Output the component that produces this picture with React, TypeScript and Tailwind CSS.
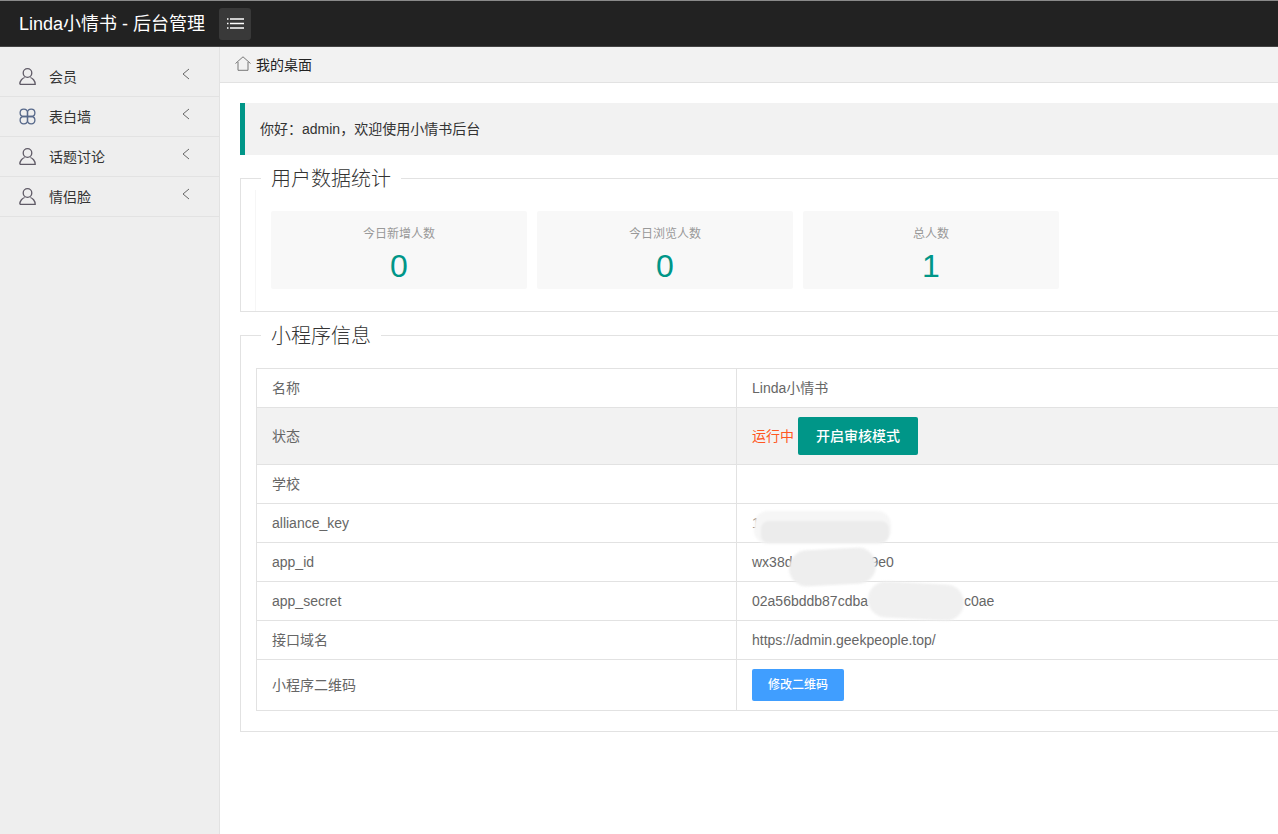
const font = "[font-family:'Liberation_Sans','Noto_Sans_CJK_SC',sans-serif]";

function UserIcon() {
  return (
    <svg width="18" height="17" viewBox="0 0 18 17" fill="none" stroke="#5f5a66" strokeWidth="1.3">
      <circle cx="8.500" cy="5" r="4.300" />
      <path d="M.8 16.300h15.400c0-3.700-2.800-6.200-4.800-6.800M.8 16.300c0-3.700 2.800-6.200 4.800-6.800" />
    </svg>
  );
}

function CloverIcon() {
  return (
    <svg width="18" height="18" viewBox="0 0 18 18" fill="none" stroke="#56688a" strokeWidth="1.3">
      <path d="M8.500 8.500H4.500a3.700 3.700 0 1 1 4-4z" />
      <path d="M8.500 8.500h4a3.700 3.700 0 1 0-4-4z" />
      <path d="M8.500 8.500H4.500a3.700 3.700 0 1 0 4 4z" />
      <path d="M8.500 8.500h4a3.700 3.700 0 1 1-4 4z" />
    </svg>
  );
}

function Chevron() {
  return (
    <svg width="8" height="12" viewBox="0 0 8 12" fill="none" stroke="#666" strokeWidth="1">
      <path d="M7 1L1 6l6 5" />
    </svg>
  );
}

function SideItem({ label, icon }: { label: string; icon: React.ReactNode }) {
  return (
    <div className="flex h-10 items-center border-b border-[#e2e2e2] pl-[19px] pr-[29px] text-sm text-[#333]">
      <span className="flex w-[30px] shrink-0">{icon}</span>
      <span className="flex-1 pt-[1px]">{label}</span>
      <span className="-mt-[5px] flex">
        <Chevron />
      </span>
    </div>
  );
}

function StatCard({ label, value }: { label: string; value: string }) {
  return (
    <div className="flex h-[78px] w-[256px] flex-col items-center rounded-[2px] bg-[#f8f8f8] pt-[15px]">
      <p className="text-xs leading-[17px] text-[#999]">{label}</p>
      <p className="mt-[4px] text-[32px] leading-[38px] text-[#009688]">{value}</p>
    </div>
  );
}

function Row({
  label,
  children,
  className = "",
}: {
  label: string;
  children?: React.ReactNode;
  className?: string;
}) {
  return (
    <tr className={className}>
      <td className="border border-[#e2e2e2] px-[15px] py-0 text-sm text-[#666]">{label}</td>
      <td className="relative border border-[#e2e2e2] px-[15px] py-0 text-sm text-[#666]">{children}</td>
    </tr>
  );
}

function Legend({ title }: { title: string }) {
  return (
    <legend className="ml-[5px] px-[10px] text-xl leading-[24px] font-light text-[#333]">
      <span className="block translate-y-px">{title}</span>
    </legend>
  );
}

export default function App() {
  return (
    <div className={`${font} flex h-[834px] w-[1278px] flex-col overflow-hidden bg-white`}>
      {/* top bar */}
      <header className="flex h-[47px] shrink-0 items-center border-t border-b border-t-[#8a8a8a] border-b-[#444] bg-[#222] pl-[19px]">
        <span className="w-[200px] text-lg whitespace-nowrap text-white">Linda小情书 - 后台管理</span>
        <button className="flex h-8 w-8 items-center justify-center rounded-[3px] bg-[#393939]">
          <svg width="17" height="11" viewBox="0 0 17 11" fill="none" stroke="#fff" strokeWidth="1.4">
            <path d="M3 1h14M3 5.500h14M3 10h14" />
            <path d="M0 1h1.500M0 5.500h1.500M0 10h1.500" />
          </svg>
        </button>
      </header>

      <div className="flex min-h-0 flex-1">
        {/* side menu */}
        <aside className="w-[220px] shrink-0 border-r border-[#e2e2e2] bg-[#eee] pt-[10px]">
          <SideItem label="会员" icon={<UserIcon />} />
          <SideItem label="表白墙" icon={<CloverIcon />} />
          <SideItem label="话题讨论" icon={<UserIcon />} />
          <SideItem label="情侣脸" icon={<UserIcon />} />
        </aside>

        <main className="min-w-0 flex-1 overflow-hidden">
          <div className="flex h-[36px] items-center gap-[5px] border-b border-[#e2e2e2] bg-[#f2f2f2] pl-[15px] text-sm text-[#222]">
            <svg className="-mt-[3px]" width="16" height="15" viewBox="0 0 16 15" fill="none" stroke="#777" strokeWidth="1">
              <path d="M.5 7.500L8 .8l7.500 6.700M3 6v8.300h10V6" />
            </svg>
            <span>我的桌面</span>
          </div>

          <div className="w-[1100px] pt-[20px] pl-[20px]">
            <div className="flex h-[52px] items-center border-l-[5px] border-[#009688] bg-[#f2f2f2] pl-[15px] text-sm text-[#333]">
              你好：admin，欢迎使用小情书后台
            </div>

            <fieldset className="mt-[11px] h-[146px] border border-[#e2e2e2] pl-[15px]">
              <Legend title="用户数据统计" />
              <div className="-ml-px flex h-[121px] gap-[10px] border-l border-[#f6f6f6] pl-[15px] pt-[21px]">
                <StatCard label="今日新增人数" value="0" />
                <StatCard label="今日浏览人数" value="0" />
                <StatCard label="总人数" value="1" />
              </div>
            </fieldset>

            <fieldset className="mt-[11px] h-[409px] border border-[#e2e2e2] px-[15px]">
              <Legend title="小程序信息" />
              <table className="mt-[21px] w-[1040px] table-fixed border-collapse">
                <colgroup>
                  <col className="w-[480px]" />
                  <col />
                </colgroup>
                <tbody>
                  <Row label="名称" className="h-[39px]">Linda小情书</Row>
                  <Row label="状态" className="h-[57px] bg-[#f2f2f2]">
                    <div className="flex items-center gap-[4px]">
                      <span className="text-[#ff5722]">运行中</span>
                      <button className="h-[38px] w-[120px] rounded-[2px] bg-[#009688] text-sm font-medium text-white">
                        开启审核模式
                      </button>
                    </div>
                  </Row>
                  <Row label="学校" className="h-[39px]" />
                  <Row label="alliance_key" className="h-[39px]">
                    <span>1</span>
                    <div className="absolute top-[7px] left-[17px] h-[33px] w-[137px] rounded-[14px] bg-[#f6f6f6] blur-[1px]">
                      <div className="absolute top-[10px] right-[2px] left-[7px] h-[22px] rounded-[8px] bg-[#ececec]" />
                    </div>
                  </Row>
                  <Row label="app_id" className="h-[39px]">
                    <span>wx38d</span>
                    <span className="ml-[78px]">9e0</span>
                    <div className="absolute top-[6px] left-[52px] h-[36px] w-[87px] -rotate-3 rounded-[18px] bg-[#eeeeee] blur-[1px]" />
                  </Row>
                  <Row label="app_secret" className="h-[39px]">
                    <span>02a56bddb87cdba</span>
                    <span className="ml-[96px]">c0ae</span>
                    <div className="absolute top-[1px] left-[131px] h-[36px] w-[96px] rotate-3 rounded-[18px] bg-[#f0f0f0] blur-[1px]" />
                  </Row>
                  <Row label="接口域名" className="h-[39px]">https://admin.geekpeople.top/</Row>
                  <Row label="小程序二维码" className="h-[51px]">
                    <button className="block h-[32px] w-[92px] rounded-[2px] bg-[#409eff] text-xs font-medium text-white">
                      修改二维码
                    </button>
                  </Row>
                </tbody>
              </table>
            </fieldset>
          </div>
        </main>
      </div>
    </div>
  );
}
